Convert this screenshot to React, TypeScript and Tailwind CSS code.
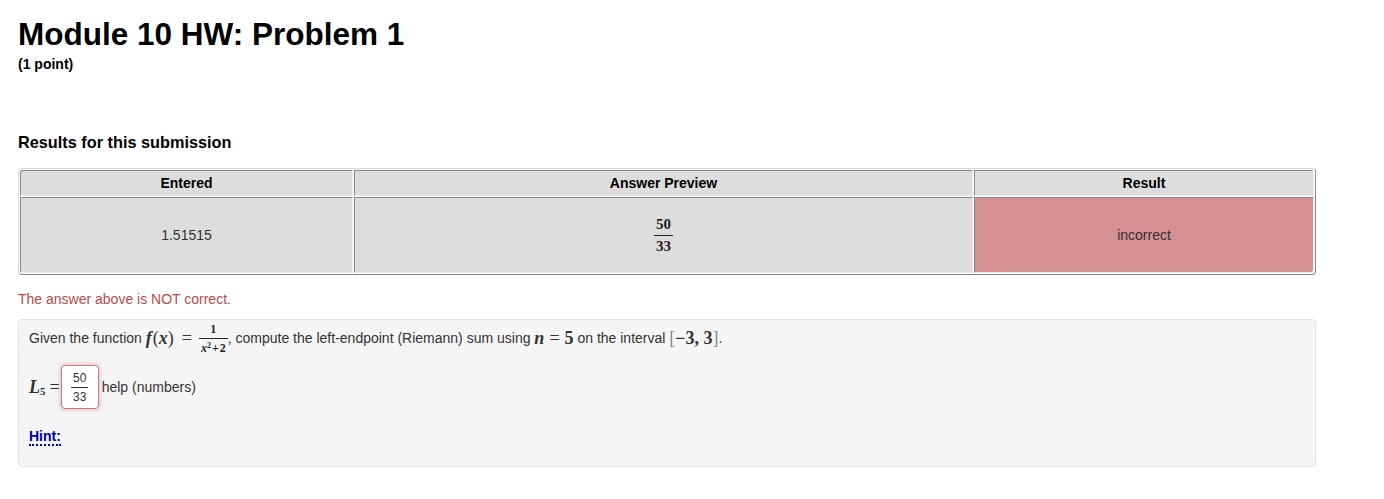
const serif = "font-['Liberation_Serif',serif]";

function Frac({ num, den, className }: { num: React.ReactNode; den: React.ReactNode; className?: string }) {
  return (
    <span className={`inline-flex flex-col items-center align-middle ${className ?? ''}`}>
      <span className="px-[2px] leading-none">{num}</span>
      <span className="my-[3px] h-px w-full bg-current" />
      <span className="px-[2px] leading-none">{den}</span>
    </span>
  );
}

export default function App() {
  return (
    <div className="min-h-[499px] bg-white pl-[18px] pt-[14px] font-['Liberation_Sans',Arial,sans-serif] text-[14px] text-[#333]">
      <h2 className="text-[31.5px] font-bold leading-[40px] text-black">Module 10 HW: Problem 1</h2>
      <p className="mt-[2px] text-[14px] font-bold leading-[16px] text-black">(1 point)</p>

      <h3 className="mt-[60px] text-[16.3px] font-bold leading-[20px] text-black">Results for this submission</h3>

      <table className="mt-[16px] w-[1298px] table-fixed border-separate border-spacing-[1px] rounded-[4px] border border-t-[#d8d8d8] border-l-[#d8d8d8] border-r-[#8a8a8a] border-b-[#8a8a8a] text-center">
        <thead>
          <tr className="h-[26px]">
            <th className="w-[333px] rounded-tl-[3px] border border-t-[#888] border-l-[#888] border-r-[#eee] border-b-[#eee] bg-[#ddd] font-bold text-black">Entered</th>
            <th className="w-[619px] border border-t-[#888] border-l-[#888] border-r-[#eee] border-b-[#eee] bg-[#ddd] font-bold text-black">Answer Preview</th>
            <th className="rounded-tr-[3px] border border-t-[#888] border-l-[#888] border-r-[#eee] border-b-[#eee] bg-[#ddd] font-bold text-black">Result</th>
          </tr>
        </thead>
        <tbody>
          <tr className="h-[76px]">
            <td className="rounded-bl-[3px] border border-t-[#888] border-l-[#888] border-r-[#eee] border-b-[#eee] bg-[#ddd]">1.51515</td>
            <td className="border border-t-[#888] border-l-[#888] border-r-[#eee] border-b-[#eee] bg-[#ddd]">
              <Frac num="50" den="33" className={`${serif} text-[15px] font-bold text-[#222]`} />
            </td>
            <td className="rounded-br-[3px] border border-t-[#888] border-l-[#888] border-r-[#eee] border-b-[#eee] bg-[#d59090] text-[#3a2a3a]">incorrect</td>
          </tr>
        </tbody>
      </table>

      <p className="mt-[14px] leading-[20px] text-[#b94a48]">The answer above is NOT correct.</p>

      <div className="mt-[10px] w-[1298px] rounded-[4px] border border-[#e3e3e3] bg-[#f5f5f5] px-[10px] pb-[20px] pt-[8px]">
        <p className="flex h-[20px] items-center leading-[20px]">
          <span>Given the function&nbsp;</span>
          <span className={`${serif} text-[18px]`}>
            <i className="font-bold">f</i>
            <span className="ml-[1px]">(</span>
            <i className="font-bold">x</i>
            <span className="mr-[1px]">)</span>
          </span>
          <span className={`${serif} mx-[7px] text-[18px]`}>=</span>
          <Frac
            num={<span className="font-bold">1</span>}
            den={
              <span className="font-bold">
                <i>x</i>
                <sup className="text-[8px]">2</sup>
                <span className="mx-[1px]">+</span>2
              </span>
            }
            className={`${serif} text-[12px] text-[#222]`}
          />
          <span>, compute the left-endpoint (Riemann) sum using&nbsp;</span>
          <span className={`${serif} text-[18px]`}>
            <i className="font-bold">n</i>
            <span className="mx-[5px]">=</span>
            <b>5</b>
          </span>
          <span>&nbsp;on the interval&nbsp;</span>
          <span className={`${serif} text-[18px]`}>
            <span className="text-[#888]">[</span>
            <b>−3,&nbsp;3</b>
            <span className="text-[#888]">]</span>
          </span>
          <span>.</span>
        </p>

        <div className="mt-[17px] flex items-center">
          <span className={`${serif} text-[18px]`}>
            <i className="font-bold">L</i>
            <sub className="text-[11px] font-bold">5</sub>
          </span>
          <span className={`${serif} ml-[4px] text-[18px]`}>=</span>
          <span className="ml-[1px] flex h-[44px] w-[38px] items-center justify-center rounded-[4px] border border-[#c9797a] bg-white shadow-[0_0_5px_rgba(185,74,72,0.45)]">
            <Frac num="50" den="33" className="text-[12px] text-[#333]" />
          </span>
          <span className="ml-[3px]">help (numbers)</span>
        </div>

        <div className="mt-[17px] leading-[20px]">
          <span className="border-b-2 border-dotted border-[#0000aa] font-bold text-[#0000aa]">Hint:</span>
        </div>
      </div>
    </div>
  );
}
